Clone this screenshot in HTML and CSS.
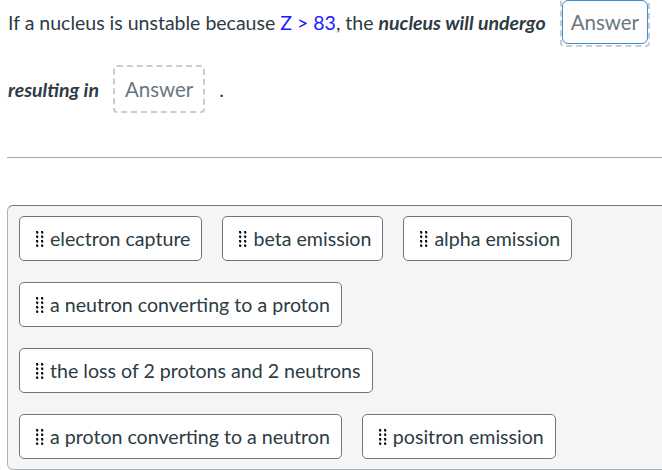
FILE: index.html
```html
<!DOCTYPE html>
<html>
<head>
<meta charset="utf-8">
<link rel="stylesheet" href="styles.css">
</head>
<body>
<div class="question">
  <div class="line line1">
    <span>If a nucleus is unstable because <span class="blue">Z &gt; 83</span>, the <b><i>nucleus will undergo</i></b></span>
    <span class="drop focused"><span class="answer">Answer</span></span>
  </div>
  <div class="line line2">
    <b><i>resulting in</i></b>
    <span class="drop"><span class="answer">Answer</span></span>
    <span class="dot">.</span>
  </div>
</div>
<hr class="sep">
<div class="bank">
  <div class="row">
    <div class="chip"><span class="grip"></span>electron capture</div>
    <div class="chip"><span class="grip"></span>beta emission</div>
    <div class="chip"><span class="grip"></span>alpha emission</div>
  </div>
  <div class="row">
    <div class="chip"><span class="grip"></span>a neutron converting to a proton</div>
  </div>
  <div class="row">
    <div class="chip"><span class="grip"></span>the loss of 2 protons and 2 neutrons</div>
  </div>
  <div class="row">
    <div class="chip"><span class="grip"></span>a proton converting to a neutron</div>
    <div class="chip"><span class="grip"></span>positron emission</div>
  </div>
</div>
</body>
</html>
```
FILE: styles.css
```css
* { box-sizing: border-box; }
html, body { margin: 0; padding: 0; background: #fff; overflow: hidden; }
body {
  font-family: Lato, "Open Sans", sans-serif;
  color: #2d3b45;
  font-size: 19.5px;
  width: 662px;
  height: 470px;
  padding-left: 8px;
}
.line { display: flex; align-items: center; }
.line1 { height: 46px; margin-top: -1px; }
.line2 { height: 48px; margin-top: 20px; }
.blue { color: #1a1aff; }
.drop {
  display: inline-flex;
  border: 2px dashed #c7cdd1;
  border-radius: 4px;
  margin-left: 14px;
  padding: 0 10px;
  height: 48px;
  align-items: center;
}
.line1 .drop { margin-left: 14px; padding: 0; height: 50px; }
.focused .answer {
  border: 1px solid #3c8fd2;
  border-radius: 6px;
  height: 44px;
  padding: 0 8px;
  display: flex;
  align-items: center;
}
.answer { color: #6b7780; font-size: 20.5px; }
.dot { margin-left: 14px; }
.sep {
  border: 0;
  border-top: 1px solid #a0a7ad;
  margin: 44px 0 0 -1px;
  height: 0;
}
.bank {
  margin-top: 47px;
  margin-left: -1px;
  width: 700px;
  background: #f5f5f5;
  border: 1px solid #a9b1b7;
  border-top-color: #6b7780;
  border-radius: 6px;
  padding: 10px 11px;
  display: flex;
  flex-direction: column;
  gap: 21px;
  font-size: 19.6px;
}
.row { display: flex; gap: 20px; }
.chip {
  background: #fff;
  border: 1px solid #6b7780;
  border-radius: 5px;
  height: 45px;
  padding: 0 11px 0 16px;
  display: flex;
  align-items: center;
  white-space: nowrap;
}
.grip {
  width: 8px;
  height: 16px;
  margin-right: 6px;
  background-image: radial-gradient(circle at 1.25px 1.25px, #111 1.1px, transparent 1.4px);
  background-size: 5px 4.5px;
  flex: none;
}
```
